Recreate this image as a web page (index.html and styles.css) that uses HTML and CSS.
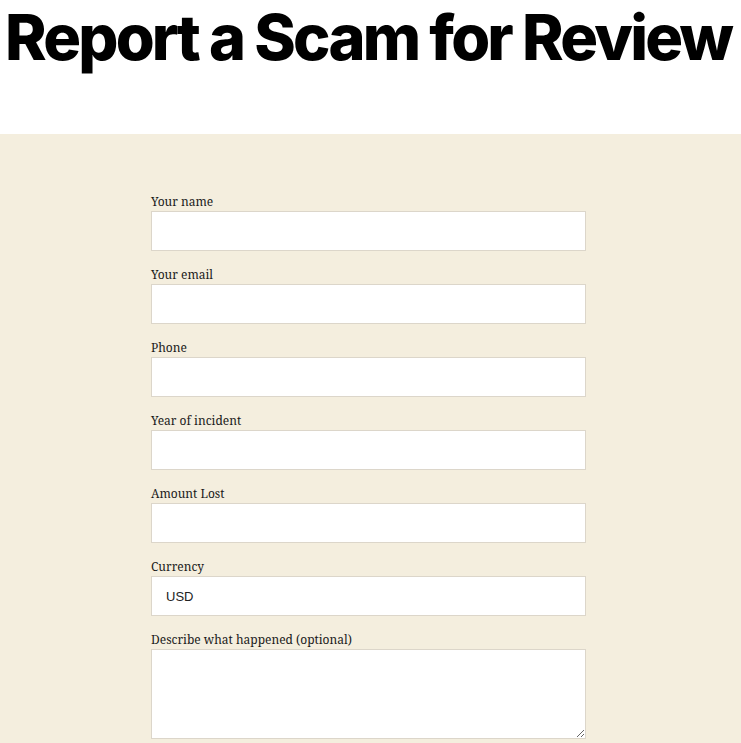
FILE: index.html
```html
<!DOCTYPE html>
<html lang="en">
<head>
    <meta charset="UTF-8">
    <meta name="viewport" content="width=device-width, initial-scale=1.0">
    <title>Report a Scam for Review</title>
    <link rel="stylesheet" href="styles.css">
</head>
<body>
    <!-- Page title -->
    <h1 class="page-title">Report a Scam for Review</h1>

    <!-- Report form -->
    <div class="form-band">
        <form class="report-form">
            <div class="field">
                <label for="name">Your name</label>
                <input type="text" id="name">
            </div>
            <div class="field">
                <label for="email">Your email</label>
                <input type="email" id="email">
            </div>
            <div class="field">
                <label for="phone">Phone</label>
                <input type="text" id="phone">
            </div>
            <div class="field">
                <label for="year">Year of incident</label>
                <input type="text" id="year">
            </div>
            <div class="field">
                <label for="amount">Amount Lost</label>
                <input type="text" id="amount">
            </div>
            <div class="field">
                <label for="currency">Currency</label>
                <input type="text" id="currency" value="USD">
            </div>
            <div class="field">
                <label for="details">Describe what happened (optional)</label>
                <textarea id="details"></textarea>
            </div>
        </form>
    </div>
</body>
</html>
```
FILE: styles.css
```css
body {
    margin: 0;
    padding: 0;
    background-color: #fff;
    font-family: 'Noto Serif', 'DejaVu Serif', serif;
}

.page-title {
    font-family: 'Inter', sans-serif;
    font-weight: 800;
    font-size: 63px;
    letter-spacing: -2.8px;
    line-height: 1;
    color: #000;
    margin: 0;
    padding: 6px 0 0 5px;
    height: 128px;
    white-space: nowrap;
}

.form-band {
    background-color: #f4eede;
    padding: 59px 0 20px;
}

.report-form {
    width: 435px;
    margin-left: 151px;
}

.field {
    margin-bottom: 15px;
}

.field label {
    display: block;
    font-size: 12px;
    line-height: 17px;
    color: #1a1a1a;
    margin-bottom: 1px;
}

.field input,
.field textarea {
    display: block;
    box-sizing: border-box;
    width: 100%;
    height: 40px;
    padding: 0 14px;
    border: 1px solid #dcd6ca;
    background-color: #fff;
    font-family: 'Liberation Sans', Arial, sans-serif;
    font-size: 13px;
    color: #222;
    outline: none;
}

.field textarea {
    height: 90px;
    padding: 10px 14px;
}
```
